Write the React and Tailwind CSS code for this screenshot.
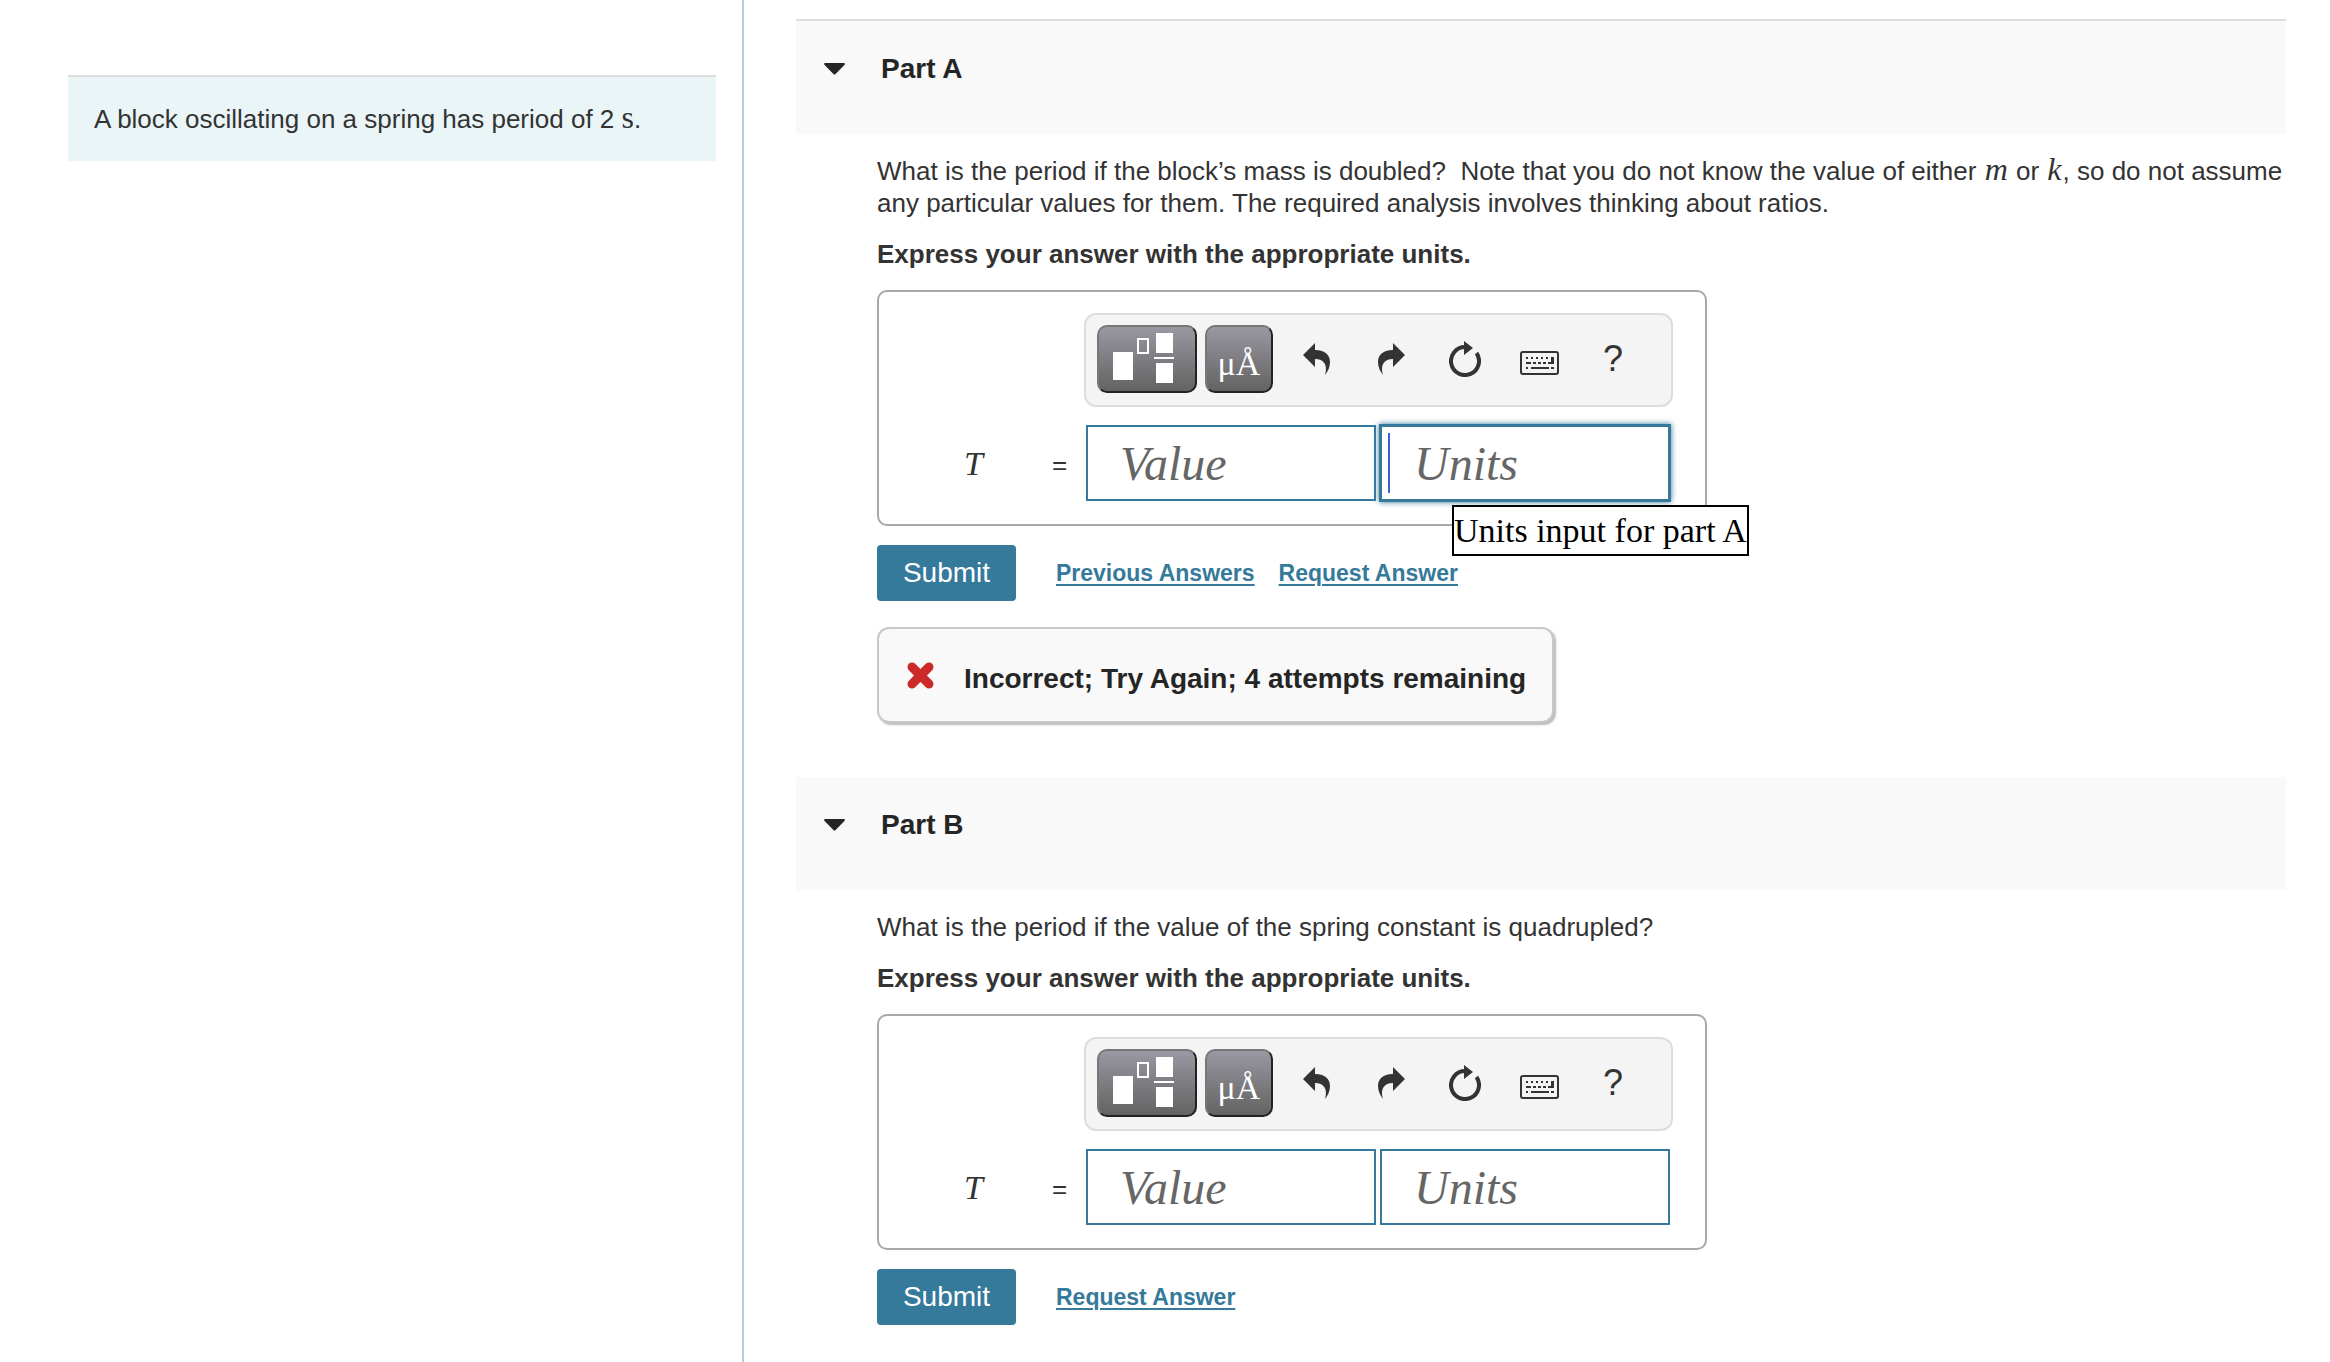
import React from 'react';

const CaretDown = () => (
  <svg width="21" height="12" viewBox="0 0 21 12" className="shrink-0" aria-hidden="true">
    <path d="M1 0 H20 Q21.5 0.5 20.4 2 L11.6 11 Q10.5 12.2 9.4 11 L0.6 2 Q-0.5 0.5 1 0 Z" fill="#252525" />
  </svg>
);

const TemplateIcon = () => (
  <svg width="62" height="52" viewBox="0 0 62 52" aria-hidden="true">
    <rect x="1" y="19" width="20" height="28" fill="#fff" />
    <rect x="26" y="6" width="10" height="14" fill="none" stroke="#fff" strokeWidth="2" />
    <rect x="44" y="0" width="17" height="20" fill="#fff" />
    <rect x="42" y="24" width="20" height="2" fill="#fff" />
    <rect x="44" y="30" width="17" height="20" fill="#fff" />
  </svg>
);

const UndoIcon = () => (
  <svg width="28" height="32" viewBox="0 0 28 32" fill="#333" aria-hidden="true">
    <path d="M0 12 L12 0 V7 C23 7 27 13 27 19 C27 24 25 28 22 32 C25 22 21 16 12 16 V24 Z" />
  </svg>
);

const RedoIcon = () => (
  <svg width="28" height="32" viewBox="0 0 28 32" fill="#333" aria-hidden="true">
    <path d="M28 12 L16 0 V7 C5 7 1 13 1 19 C1 24 3 28 6 32 C3 22 7 16 16 16 V24 Z" />
  </svg>
);

const ResetIcon = () => (
  <svg width="32" height="36" viewBox="0 0 32 36" aria-hidden="true">
    <path d="M16 6 A14 14 0 1 0 27.5 12" fill="none" stroke="#333" strokeWidth="4" />
    <path d="M15 0 L24 7 L15 14 Z" fill="#333" />
  </svg>
);

const KeyboardIcon = () => (
  <svg width="39" height="24" viewBox="0 0 39 24" fill="#333" aria-hidden="true">
    <rect x="1" y="1" width="37" height="22" rx="2" fill="none" stroke="#333" strokeWidth="2" />
    <path d="M6 6h2v2h-2z M11 6h2v2h-2z M16 6h2v2h-2z M21 6h2v2h-2z M26 6h2v2h-2z M31 6h3v7h-6v-2h3z M6 11h5v2h-5z M13 11h3v2h-3z M18 11h3v2h-3z M23 11h3v2h-3z M6 16h2v2h-2z M11 16h18v2h-18z M31 16h3v2h-3z" />
  </svg>
);

const WrongIcon = () => (
  <svg width="27" height="27" viewBox="0 0 27 27" className="shrink-0" aria-hidden="true">
    <path d="M5 5 L22 22 M22 5 L5 22" stroke="#cc2929" strokeWidth="9" strokeLinecap="round" />
  </svg>
);

const toolButton =
  'flex h-[68px] items-center justify-center rounded-[10px] border-2 border-t-[#777] border-l-[#777] border-r-[#222] border-b-[#222] bg-linear-to-b from-[#9a98a2] to-[#636363] text-white';

const iconButton = 'flex w-12 h-12 items-center justify-center';

const Toolbar = () => (
  <div className="flex h-[94px] w-[589px] items-start rounded-xl border-2 border-[#ddd] bg-[#f4f4f4] pt-[10px] pl-[11px]">
    <button type="button" aria-label="Templates" className={`${toolButton} w-[100px] pr-2`}>
      <TemplateIcon />
    </button>
    <button
      type="button"
      aria-label="Symbols"
      className={`${toolButton} ml-2 w-[68px] pt-2 font-['Liberation_Serif',serif] text-[34px]`}
    >
      μÅ
    </button>
    <div className="ml-5 flex h-[68px] items-center gap-[26px]">
      <button type="button" aria-label="Undo" className={iconButton}>
        <UndoIcon />
      </button>
      <button type="button" aria-label="Redo" className={iconButton}>
        <RedoIcon />
      </button>
      <button type="button" aria-label="Reset" className={iconButton}>
        <ResetIcon />
      </button>
      <button type="button" aria-label="Keyboard shortcuts" className={`${iconButton} pt-2`}>
        <KeyboardIcon />
      </button>
      <button type="button" aria-label="Help" className={`${iconButton} text-4xl text-[#333]`}>
        ?
      </button>
    </div>
  </div>
);

const inputStyle =
  "h-[76px] w-[290px] border-2 border-[#35799b] bg-white px-8 font-['Liberation_Serif',serif] text-5xl italic text-[#333] outline-none placeholder:text-[#666] placeholder:opacity-100";

const AnswerBox = ({ part, unitsFocused }) => (
  <div className="w-[830px] rounded-[10px] border-2 border-[#a8a8a8] pt-[21px] pb-[23px]">
    <div className="ml-[205px]">
      <Toolbar />
    </div>
    <div className="mt-[18px] flex items-center">
      <span className="w-[173px] pl-[85px] font-['Liberation_Serif',serif] text-[34px] italic">T</span>
      <span className="w-[34px] pt-1 text-[26px]">=</span>
      <input type="text" placeholder="Value" aria-label={`Value input for part ${part}`} className={inputStyle} />
      <div className="relative ml-1">
        <input
          type="text"
          placeholder="Units"
          aria-label={`Units input for part ${part}`}
          className={`${inputStyle} block ${unitsFocused ? 'shadow-[0_0_0_1px_#35799b,0_0_6px_1px_#35799b]' : ''}`}
        />
        {unitsFocused && (
          <>
            <span className="absolute top-2 left-2 h-[60px] w-[2px] bg-[#3b5fd6]" />
            <div
              role="tooltip"
              className="absolute top-20 left-[72px] border-2 border-black bg-white font-['Liberation_Serif',serif] text-[34px] leading-[47px] whitespace-nowrap text-black"
            >
              Units input for part {part}
            </div>
          </>
        )}
      </div>
    </div>
  </div>
);

const Part = ({ name, first, unitsFocused, links, feedback, children }) => (
  <section>
    <div className={`h-[113px] bg-[#f9f9f9] ${first ? 'box-content border-t-2 border-[#dedede]' : ''}`}>
      <button type="button" aria-expanded="true" className="flex items-center gap-9 pt-8 pl-7">
        <CaretDown />
        <h2 className="text-[28px] leading-8 font-bold text-[#252525]">Part {name}</h2>
      </button>
    </div>
    <div className="pt-[21px] pl-[81px]">
      <p className="text-[26px] leading-8">{children}</p>
      <p className="mt-[19px] text-[26px] leading-8 font-bold">Express your answer with the appropriate units.</p>
      <div className="mt-5">
        <AnswerBox part={name} unitsFocused={unitsFocused} />
      </div>
      <div className="mt-[19px] flex items-center">
        <button type="button" className="mr-10 h-14 w-[139px] rounded bg-[#35799b] text-[28px] text-white">
          Submit
        </button>
        <div className="flex gap-6">
          {links.map((label) => (
            <a
              key={label}
              href="#"
              className="text-[23px] font-bold text-[#35799b] underline decoration-2 underline-offset-3"
            >
              {label}
            </a>
          ))}
        </div>
      </div>
      {feedback && (
        <div className="mt-[26px] flex h-[96px] w-fit items-center gap-[30px] rounded-xl border-2 border-[#c8c8c8] bg-[#f9f9f9] pr-[26px] pl-7 shadow-[2px_2px_2px_#bbb]">
          <WrongIcon />
          <span className="pt-2 text-[28px] font-bold text-[#252525]">{feedback}</span>
        </div>
      )}
    </div>
  </section>
);

const MathVar = ({ children }) => (
  <span className="mx-px font-['Liberation_Serif',serif] text-[32px] leading-6 italic">{children}</span>
);

const App = () => {
  return (
    <div className="flex min-h-screen bg-white font-['Liberation_Sans',Arial,sans-serif] text-[#333]">
      <aside className="w-[744px] shrink-0 border-r-2 border-[#bccbdc] pt-[75px] pr-[26px] pl-[68px]">
        <div className="border-t-2 border-[#dedede] bg-[#eaf5f7] px-[26px] py-[26px] text-[26px] leading-8">
          A block oscillating on a spring has period of 2{' '}
          <span className="font-['Liberation_Serif',serif] text-[32px] leading-6">s</span>.
        </div>
      </aside>
      <main className="min-w-0 flex-1 pt-[19px] pr-11 pl-[52px]">
        <Part
          name="A"
          first
          unitsFocused
          links={['Previous Answers', 'Request Answer']}
          feedback="Incorrect; Try Again; 4 attempts remaining"
        >
          What is the period if the block’s mass is doubled?&nbsp; Note that you do not know the value of either{' '}
          <MathVar>m</MathVar> or <MathVar>k</MathVar>, so do not assume any particular values for them. The required
          analysis involves thinking about ratios.
        </Part>
        <div className="mt-[54px]">
          <Part name="B" links={['Request Answer']}>
            What is the period if the value of the spring constant is quadrupled?
          </Part>
        </div>
      </main>
    </div>
  );
};

export default App;
